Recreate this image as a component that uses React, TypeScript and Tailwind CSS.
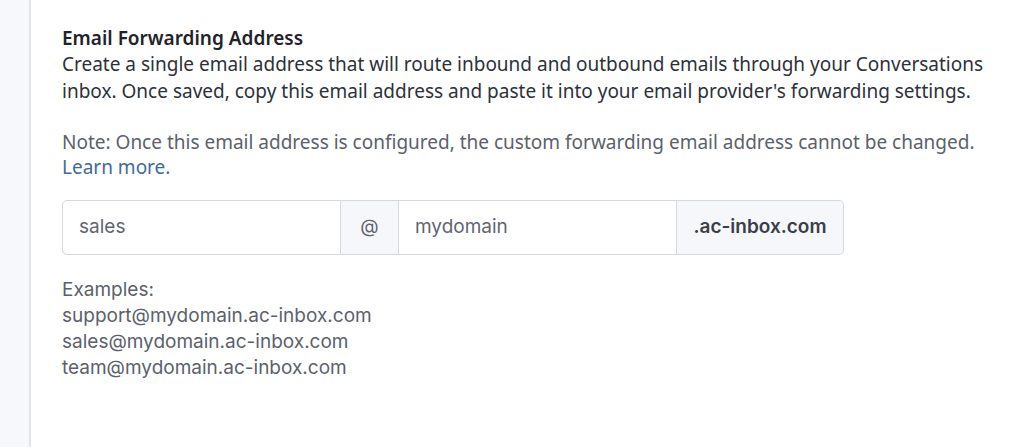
import React from 'react'

const examples = [
  'support@mydomain.ac-inbox.com',
  'sales@mydomain.ac-inbox.com',
  'team@mydomain.ac-inbox.com',
]

export default function App() {
  return (
    <div className="flex h-[447px] w-[1024px] bg-white overflow-hidden">
      {/* Left rail */}
      <div className="w-[31px] shrink-0 bg-[#f7f8fb] border-r-2 border-[#e1e4ea]" />

      {/* Content */}
      <div className="flex-1 pl-[31px] pt-[26px] font-['Noto_Sans',sans-serif]">
        <h2 className="text-[19px] leading-[25px] font-semibold text-[#1f2329]">Email Forwarding Address</h2>
        <p className="text-[19px] leading-[27px] text-[#2c3139] whitespace-nowrap">
          Create a single email address that will route inbound and outbound emails through your Conversations
          <br />
          inbox. Once saved, copy this email address and paste it into your email provider's forwarding settings.
        </p>

        <p className="mt-[25px] text-[19px] leading-[25px] text-[#5b616b] whitespace-nowrap">
          Note: Once this email address is configured, the custom forwarding email address cannot be changed.
          <br />
          <a href="#" className="text-[#3f6a9a]">Learn more.</a>
        </p>

        {/* Input group */}
        <div className="mt-[20px] flex h-[55px] w-[782px] font-['Inter',sans-serif] text-[19px]">
          <div className="flex w-[279px] items-center rounded-l-[5px] border border-[#d5d9df] bg-white pl-[16px] text-[#5f6570]">
            sales
          </div>
          <div className="flex w-[57px] items-center justify-center border-y border-[#d5d9df] bg-[#f6f7fa] text-[#5f6570]">
            @
          </div>
          <div className="flex w-[279px] items-center border border-[#d5d9df] bg-white pl-[16px] text-[#5f6570]">
            mydomain
          </div>
          <div className="flex flex-1 items-center justify-center rounded-r-[5px] border-y border-r border-[#d5d9df] bg-[#f6f7fa] font-semibold text-[#3a3f47]">
            .ac-inbox.com
          </div>
        </div>

        {/* Examples */}
        <div className="mt-[22px] font-['Inter',sans-serif] text-[19px] leading-[26px] text-[#5b616b]">
          <div>Examples:</div>
          {examples.map((e) => (
            <div key={e}>{e}</div>
          ))}
        </div>
      </div>
    </div>
  )
}
